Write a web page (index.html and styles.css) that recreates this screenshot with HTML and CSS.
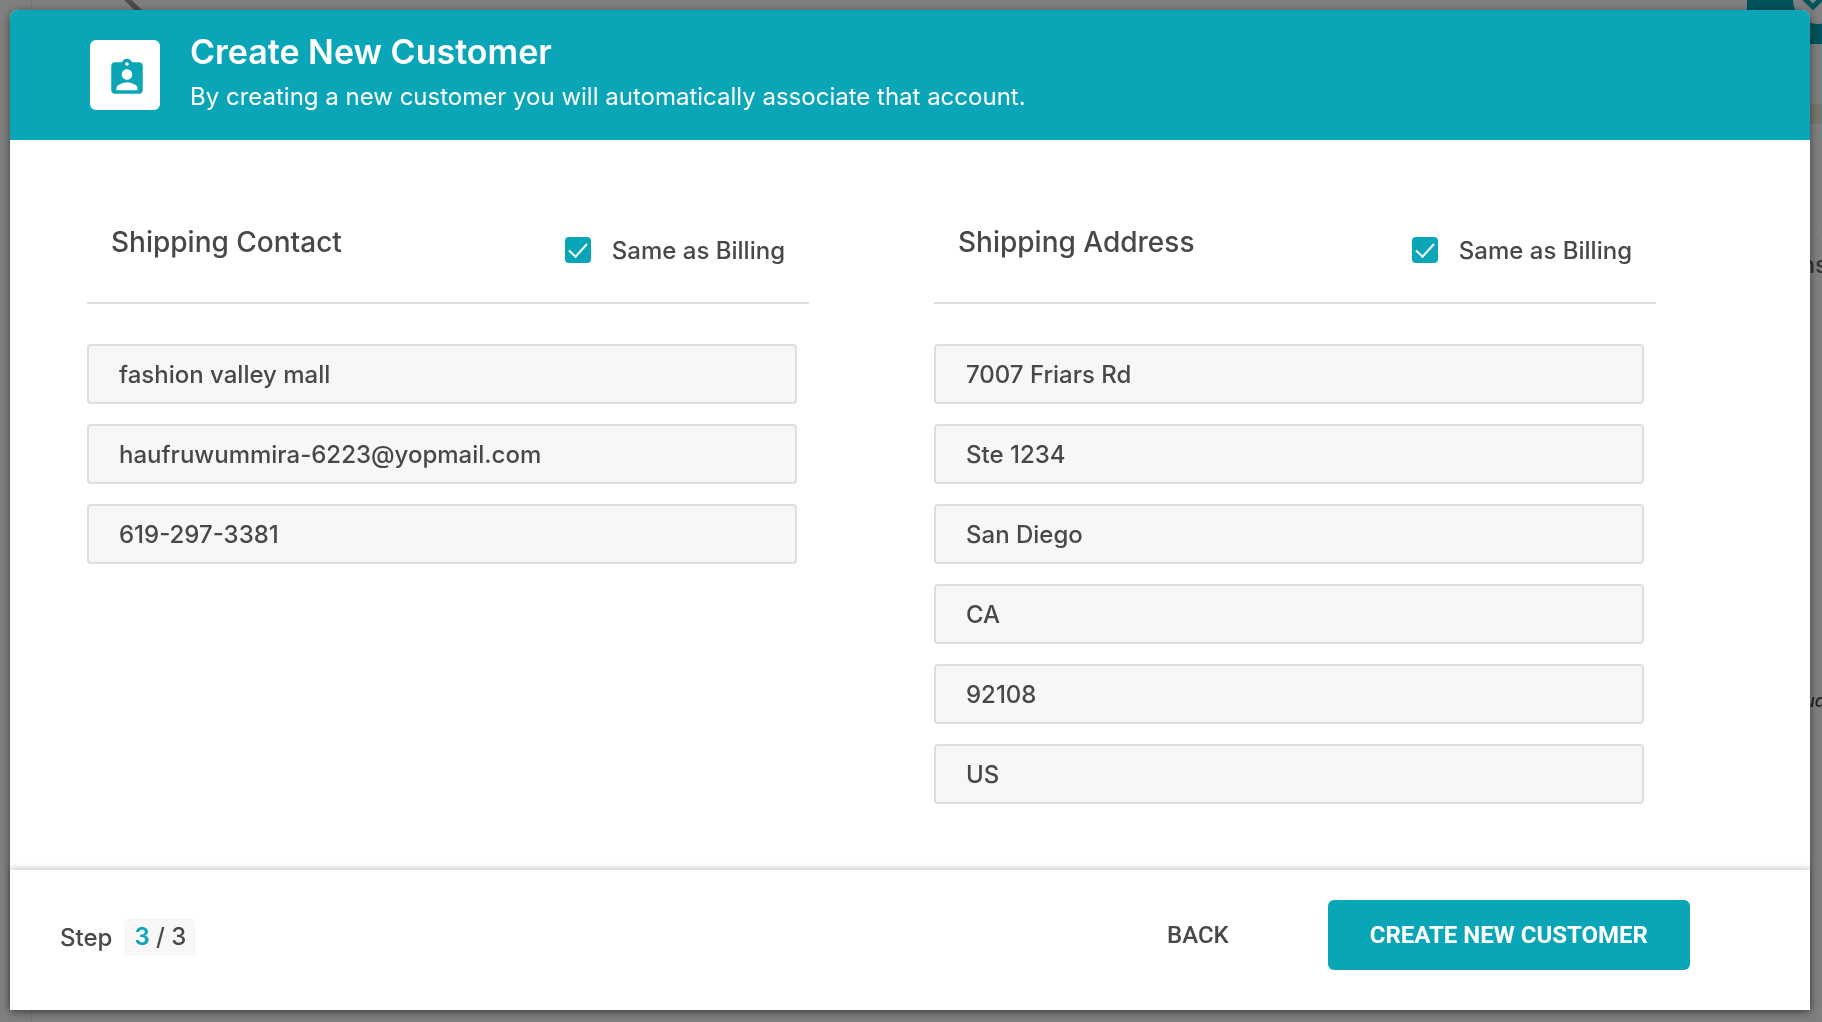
FILE: index.html
```html
<!DOCTYPE html>
<html lang="en">
<head>
    <meta charset="UTF-8">
    <meta name="viewport" content="width=device-width, initial-scale=1.0">
    <title>Create New Customer</title>
    <link rel="stylesheet" href="styles.css">
</head>
<body>
    <!-- Page behind the modal -->
    <div class="page" aria-hidden="true">
        <div class="page-rail"></div>
        <svg class="page-back" viewBox="0 0 24 24"><path d="M17 1 L6 12 L17 23" fill="none" stroke="#4d4d4d" stroke-width="4"/></svg>
        <div class="page-toast">
            <svg viewBox="0 0 48 48"><circle cx="24" cy="24" r="24" fill="#808080"/><path d="M11 22 L20 31 L34 17" fill="none" stroke="#00545b" stroke-width="5"/></svg>
        </div>
        <div class="page-strip"></div>
        <div class="page-text"><span>e</span>ns</div>
        <div class="page-map">ud</div>
    </div>

    <div class="modal" role="dialog" aria-labelledby="modalTitle">
        <header class="modal-header">
            <div class="header-icon">
                <svg viewBox="0 0 24 24" width="42" height="42"><path fill="#0aa6b7" d="M19 3h-4.180C14.400 1.840 13.300 1 12 1s-2.400.840-2.820 2H5c-1.100 0-2 .9-2 2v14c0 1.100.9 2 2 2h14c1.100 0 2-.9 2-2V5c0-1.100-.9-2-2-2zm-7 0c.550 0 1 .450 1 1s-.450 1-1 1-1-.450-1-1 .450-1 1-1zm0 4c1.660 0 3 1.340 3 3s-1.340 3-3 3-3-1.340-3-3 1.340-3 3-3zm6 12H6v-1.400c0-2 4-3.100 6-3.100s6 1.100 6 3.100V19z"/></svg>
            </div>
            <div class="header-text">
                <h1 id="modalTitle">Create New Customer</h1>
                <p>By creating a new customer you will automatically associate that account.</p>
            </div>
        </header>

        <form class="modal-form">
            <div class="modal-body">
                <!-- Shipping contact -->
                <section>
                    <div class="section-head">
                        <h2>Shipping Contact</h2>
                        <label class="same"><input type="checkbox" checked>Same as Billing</label>
                    </div>
                    <div class="fields">
                        <input type="text" aria-label="Name" value="fashion valley mall">
                        <input type="text" aria-label="Email" value="haufruwummira-6223@yopmail.com">
                        <input type="text" aria-label="Phone" value="619-297-3381">
                    </div>
                </section>

                <!-- Shipping address -->
                <section>
                    <div class="section-head">
                        <h2>Shipping Address</h2>
                        <label class="same"><input type="checkbox" checked>Same as Billing</label>
                    </div>
                    <div class="fields">
                        <input type="text" aria-label="Address line 1" value="7007 Friars Rd">
                        <input type="text" aria-label="Address line 2" value="Ste 1234">
                        <input type="text" aria-label="City" value="San Diego">
                        <input type="text" aria-label="State" value="CA">
                        <input type="text" aria-label="Zip code" value="92108">
                        <input type="text" aria-label="Country" value="US">
                    </div>
                </section>
            </div>

            <footer class="modal-footer">
                <div class="step">Step <span class="step-count"><b>3</b> / 3</span></div>
                <div class="actions">
                    <button type="button" class="btn-back">BACK</button>
                    <button type="submit" class="btn-create">CREATE NEW CUSTOMER</button>
                </div>
            </footer>
        </form>
    </div>
</body>
</html>
```
FILE: styles.css
```css
* {
    box-sizing: border-box;
}
body {
    margin: 0;
    padding: 10px 12px 12px 10px;
    min-height: 100vh;
    display: flex;
    background: #808080;
    color: #484848;
    font-family: Inter, "Liberation Sans", sans-serif;
    font-size: 24px;
    font-weight: 500;
}

/* page behind */
.page {
    position: fixed;
    inset: 0;
    overflow: hidden;
}
.page-rail {
    width: 32px;
    height: 100%;
    border-right: 1px solid #767676;
}
.page-back {
    position: absolute;
    top: -16px;
    left: 120px;
    width: 32px;
    height: 32px;
}
.page-toast {
    position: absolute;
    top: 0;
    right: 0;
    width: 75px;
    height: 44px;
    background: #00545b;
}
.page-toast svg {
    position: absolute;
    top: -24px;
    right: -19px;
    width: 48px;
    height: 48px;
}
.page-strip {
    position: absolute;
    top: 104px;
    right: 0;
    width: 40px;
    height: 20px;
    background: #7a766c;
}
.page-text {
    position: absolute;
    top: 214px;
    right: -6px;
    color: #333;
    line-height: 34px;
}
.page-text span {
    display: block;
    margin-right: -8px;
    padding-left: 20px;
}
.page-map {
    position: absolute;
    top: 690px;
    right: -4px;
    color: #222;
    font-size: 18px;
    font-style: italic;
}

/* modal */
.modal {
    position: relative;
    flex: 1;
    display: flex;
    flex-direction: column;
    background: #fff;
    border-radius: 8px 8px 0 0;
    box-shadow: 0 2px 10px rgba(0, 0, 0, 0.5);
}
.modal-header {
    display: flex;
    gap: 30px;
    height: 130px;
    padding: 20px 80px;
    align-items: center;
    background: #0aa6b7;
    border-radius: 8px 8px 0 0;
    color: #fff;
}
.header-icon {
    display: flex;
    align-items: center;
    justify-content: center;
    width: 70px;
    height: 70px;
    padding: 6px 0 0 4px;
    background: #fff;
    border-radius: 6px;
}
.header-text h1 {
    margin: 0;
    font-size: 34px;
    line-height: 44px;
    font-weight: 600;
}
.header-text p {
    margin: 0;
    line-height: 46px;
    font-weight: 400;
}
.modal-form {
    flex: 1;
    display: flex;
    flex-direction: column;
}
.modal-body {
    flex: 1;
    display: grid;
    grid-template-columns: 1fr 1fr;
    gap: 125px;
    padding: 80px 154px 60px 77px;
}
.section-head {
    display: flex;
    justify-content: space-between;
    height: 84px;
    padding: 0 24px;
    border-bottom: 2px solid #dedede;
}
.section-head h2 {
    margin: 0;
    font-size: 28px;
    line-height: 44px;
    font-weight: 500;
}
.same {
    display: flex;
    align-items: center;
    gap: 21px;
    height: 60px;
}
.same input {
    appearance: none;
    display: grid;
    place-items: center;
    width: 26px;
    height: 26px;
    margin: 0;
    background: #0aa6b7;
    border-radius: 4px;
}
.same input:checked::after {
    content: "";
    width: 8px;
    height: 16px;
    margin-top: -4px;
    border: solid #fff;
    border-width: 0 2px 2px 0;
    transform: rotate(42deg);
}
.fields {
    display: flex;
    flex-direction: column;
    gap: 20px;
    padding: 40px 12px 0 0;
}
.fields input {
    width: 100%;
    height: 60px;
    padding: 0 30px;
    border: 2px solid #dedede;
    border-radius: 4px;
    background: #f7f7f7;
    color: inherit;
    font: inherit;
}
.modal-footer {
    display: flex;
    align-items: center;
    justify-content: space-between;
    height: 140px;
    padding: 0 120px 10px 50px;
    box-shadow: 0 -2px 6px rgba(0, 0, 0, 0.2);
}
.step {
    display: flex;
    align-items: center;
    gap: 12px;
    padding-top: 4px;
}
.step-count {
    padding: 0 10px;
    line-height: 38px;
    background: #f7f7f7;
    border-radius: 8px;
}
.step-count b {
    color: #0aa6b7;
    font-weight: 600;
}
.actions {
    display: flex;
    gap: 60px;
}
.actions button {
    height: 70px;
    border: 0;
    border-radius: 6px;
    font-family: Roboto, sans-serif;
    font-size: 24px;
}
.btn-back {
    padding: 0 39px;
    background: none;
    color: #484848;
    font-weight: 500;
}
.btn-create {
    padding: 0 42px;
    background: #0aa6b7;
    color: #fff;
    font-weight: 700;
}
```
